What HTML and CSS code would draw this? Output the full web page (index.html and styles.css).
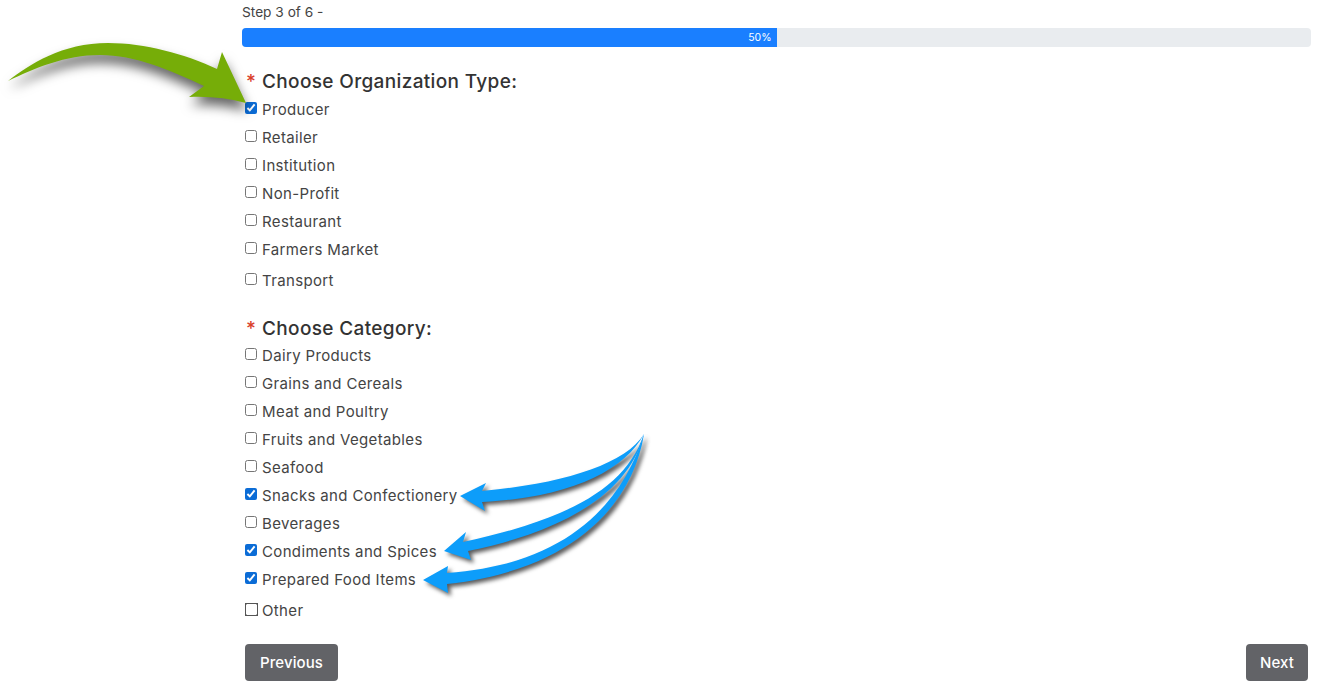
FILE: index.html
```html
<!DOCTYPE html>
<html lang="en">
<head>
  <meta charset="UTF-8" />
  <meta name="viewport" content="width=device-width, initial-scale=1.0" />
  <title>Step 3 of 6</title>
  <link rel="stylesheet" href="styles.css">
</head>
<body>
  <div class="wizard">
    <p class="step">Step 3 of 6 -</p>
    <div class="progress">
      <div class="progress-bar">50%</div>
    </div>

    <h2 class="group-title"><span class="req">*</span>Choose Organization Type:</h2>
    <div class="options">
      <label class="option"><input type="checkbox" checked />Producer</label>
      <label class="option"><input type="checkbox" />Retailer</label>
      <label class="option"><input type="checkbox" />Institution</label>
      <label class="option"><input type="checkbox" />Non-Profit</label>
      <label class="option"><input type="checkbox" />Restaurant</label>
      <label class="option"><input type="checkbox" />Farmers Market</label>
      <label class="option option-last"><input type="checkbox" />Transport</label>
    </div>

    <h2 class="group-title group-second"><span class="req">*</span>Choose Category:</h2>
    <div class="options">
      <label class="option"><input type="checkbox" />Dairy Products</label>
      <label class="option"><input type="checkbox" />Grains and Cereals</label>
      <label class="option"><input type="checkbox" />Meat and Poultry</label>
      <label class="option"><input type="checkbox" />Fruits and Vegetables</label>
      <label class="option"><input type="checkbox" />Seafood</label>
      <label class="option"><input type="checkbox" checked />Snacks and Confectionery</label>
      <label class="option"><input type="checkbox" />Beverages</label>
      <label class="option"><input type="checkbox" checked />Condiments and Spices</label>
      <label class="option"><input type="checkbox" checked />Prepared Food Items</label>
      <label class="option option-last option-other"><input type="checkbox" />Other</label>
    </div>

    <div class="actions">
      <button class="btn">Previous</button>
      <button class="btn btn-next">Next</button>
    </div>
  </div>

  <!-- arrows drawn over the form -->
  <svg class="arrows" width="1320" height="694" viewBox="0 0 1320 694">
    <path class="arrow-green" d="M8 81 C30 64 62 43 108 43 C145 43 185 54 217 69 L222 52 L246 103 C228 98 208 96 189 97 L204 86 C170 70 135 55 100 55 C65 55 35 68 8 81 Z" />
    <g class="arrow-blue">
      <path d="M644 434 C625 465 560 484 482 491 L486 483 L460 496 L485 511 L482 502 C570 498 625 470 644 434 Z" />
      <path d="M644 434 C625 490 565 520 463 542 L466 532 L444 551 L471 560 L468 551 C570 530 630 490 644 434 Z" />
      <path d="M644 434 C622 505 565 565 447 573 L448 566 L423 580 L448 593 L447 584 C575 570 633 503 644 434 Z" />
    </g>
  </svg>
</body>
</html>
```

FILE: styles.css
```css
body {
  margin: 0;
  padding: 0;
  background: #fff;
  font-family: Inter, 'Open Sans', sans-serif;
  color: #444;
}

.wizard {
  width: 1069px;
  margin-left: 242px;
}

.step {
  margin: 0;
  padding-top: 3px;
  height: 25px;
  font-size: 13.7px;
  line-height: 18px;
}

.progress {
  height: 19px;
  background: #e9ecef;
  border-radius: 4px;
  overflow: hidden;
}

.progress-bar {
  width: 50%;
  height: 100%;
  padding-right: 5px;
  box-sizing: border-box;
  background: #1a7fff;
  color: #fff;
  font-size: 10.5px;
  line-height: 19px;
  text-align: right;
}

.group-title {
  margin: 21px 0 0;
  height: 27px;
  font-size: 19px;
  font-weight: 500;
  letter-spacing: 0.35px;
  line-height: 27px;
  color: #333;
}

.group-second {
  margin-top: 22px;
  height: 25px;
  line-height: 25px;
}

.req {
  display: inline-block;
  width: 20px;
  padding-left: 4px;
  box-sizing: border-box;
  color: #d9402c;
}

.options {
  padding-left: 3px;
}

.option {
  display: flex;
  align-items: center;
  height: 28px;
  font-size: 15px;
  letter-spacing: 0.35px;
}

.option input {
  width: 12px;
  height: 12px;
  margin: 0 5px 2px 0;
  accent-color: #0b6cd6;
}

.option-last {
  margin-top: 3px;
}

.option-other input {
  width: 13px;
  height: 13px;
  margin-right: 4px;
  outline: 1px solid #555;
  outline-offset: -1px;
}

.actions {
  display: flex;
  justify-content: space-between;
  margin-top: 20px;
  padding: 0 3px;
}

.btn {
  height: 37px;
  padding: 0 15px;
  border: none;
  border-radius: 4px;
  background: #626367;
  color: #fff;
  font-family: inherit;
  font-size: 15px;
  font-weight: 500;
  letter-spacing: 0.1px;
}

.btn-next {
  padding: 0 14px;
}

.arrows {
  position: absolute;
  top: 0;
  left: 0;
  pointer-events: none;
}

.arrow-green {
  fill: #76ad08;
  filter: drop-shadow(1px 8px 6px rgba(0, 0, 0, 0.6));
}

.arrow-blue path {
  fill: #0d9dfa;
  filter: drop-shadow(3px 3px 2px rgba(0, 0, 0, 0.65));
}
```
